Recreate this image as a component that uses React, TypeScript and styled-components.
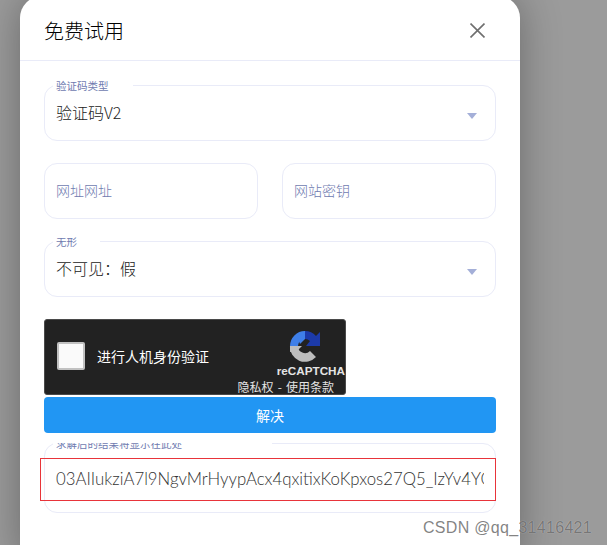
import { FC } from "react";
import styled, { createGlobalStyle } from "styled-components";

const CJK = `"Noto Sans CJK SC", "Noto Sans", sans-serif`;
const TOKEN = "03AIIukziA7l9NgvMrHyypAcx4qxitixKoKpxos27Q5_IzYv4YQ8mTnRwE2";

const GlobalStyle = createGlobalStyle`
  html, body {
    margin: 0;
    height: 100%;
    overflow: hidden;
    background: #9b9b9b;
    font-family: ${CJK};
  }
`;

type SelectFieldProps = {
  label: string;
  value: string;
  notch: number;
};

const SelectField: FC<SelectFieldProps> = ({ label, value, notch }) => (
  <Field>
    <FloatLabel $width={notch}>{label}</FloatLabel>
    <Value>{value}</Value>
    <Caret />
  </Field>
);

const RecaptchaLogo: FC = () => (
  <svg width="32" height="32" viewBox="0 0 32 32">
    <path d="M1 16 A15 15 0 0 1 16 1 L20 5 L16 9 A7 7 0 0 0 9 16 Z" fill="#3f7fe8" />
    <path d="M16 1 L20 5 L16 9 L11 14 L8 6 Z" fill="#3f7fe8" />
    <path d="M16 1 A15 15 0 0 1 27 6 L31 2 V16 H17 L21 11 A7 7 0 0 0 16 9 Z" fill="#1c3aa9" />
    <path d="M1 16 A15 15 0 0 0 27 27 L21 21 A7 7 0 0 1 9 16 L12 16 L1 16 Z" fill="#bdbdbd" />
    <path d="M1 16 H13 L8 21 L1 22 Z" fill="#bdbdbd" />
  </svg>
);

export default function App() {
  return (
    <>
      <GlobalStyle />
      <Page>
        <Modal>
          <Header>
            <Title>免费试用</Title>
            <CloseIcon viewBox="0 0 14 14">
              <path d="M0.5 0.5 L13.5 13.5 M13.5 0.5 L0.5 13.5" />
            </CloseIcon>
          </Header>
          <Body>
            <SelectField label="验证码类型" value="验证码V2" notch={80} />
            <Row>
              <RowField>
                <Placeholder>网址网址</Placeholder>
              </RowField>
              <RowField>
                <Placeholder>网站密钥</Placeholder>
              </RowField>
            </Row>
            <SelectField label="无形" value="不可见：假" notch={47} />
            <CaptchaGroup>
              <Captcha>
                <Checkbox />
                <CaptchaText>进行人机身份验证</CaptchaText>
                <CaptchaBrand>
                  <RecaptchaLogo />
                  <BrandName>reCAPTCHA</BrandName>
                  <BrandLinks>隐私权 - 使用条款</BrandLinks>
                </CaptchaBrand>
              </Captcha>
              <SolveButton>解决</SolveButton>
            </CaptchaGroup>
            <ResultField>
              <ClippedLabel>
                <span>求解后的结果将显示在此处</span>
              </ClippedLabel>
              <TokenText>{TOKEN}</TokenText>
              <RedMark />
            </ResultField>
          </Body>
        </Modal>
        <Watermark>CSDN @qq_31416421</Watermark>
      </Page>
    </>
  );
}

const Page = styled.div`
  position: relative;
  width: 607px;
  height: 545px;
  overflow: hidden;
  padding-left: 20px;
  box-sizing: border-box;
`;

const Modal = styled.div`
  width: 500px;
  height: 570px;
  margin-top: -4px;
  background: #fff;
  border-radius: 22px;
  box-shadow: 0 0 42px rgba(0, 0, 0, 0.32);
`;

const Header = styled.div`
  display: flex;
  align-items: center;
  justify-content: space-between;
  box-sizing: border-box;
  height: 65px;
  padding: 4px 35px 0 24px;
  border-bottom: 1px solid #e9ebf8;
`;

const Title = styled.div`
  font-size: 20px;
  font-weight: 300;
  color: #000;
`;

const CloseIcon = styled.svg`
  width: 15px;
  height: 15px;
  fill: none;
  stroke: #6f6f6f;
  stroke-width: 1.5;
`;

const Body = styled.div`
  display: flex;
  flex-direction: column;
  gap: 22px;
  padding: 24px 24px 0;
`;

const Row = styled.div`
  display: flex;
  gap: 24px;
`;

const Field = styled.div`
  position: relative;
  display: flex;
  align-items: center;
  box-sizing: border-box;
  height: 56px;
  padding: 0 11px 2px;
  border: 1px solid #e9ebf8;
  border-radius: 13px;
`;

const RowField = styled(Field)`
  flex: 1;
`;

const FloatLabel = styled.div<{ $width: number }>`
  position: absolute;
  top: -7px;
  left: 8px;
  box-sizing: border-box;
  width: ${(p) => p.$width}px;
  padding-left: 3px;
  background: #fff;
  font-size: 10.5px;
  line-height: 13px;
  color: #6f7bb0;
`;

const Value = styled.div`
  font-size: 16px;
  font-weight: 300;
  color: #222;
`;

const Placeholder = styled.div`
  font-size: 14px;
  font-weight: 300;
  color: #6f7bb0;
`;

const Caret = styled.div`
  position: absolute;
  right: 18px;
  top: 27px;
  border-left: 5px solid transparent;
  border-right: 5px solid transparent;
  border-top: 6px solid #a4afd8;
`;

const CaptchaGroup = styled.div`
  display: flex;
  flex-direction: column;
  gap: 2px;
`;

const Captcha = styled.div`
  display: flex;
  align-items: center;
  box-sizing: border-box;
  width: 302px;
  height: 76px;
  padding: 0 0 2px 12px;
  background: #222;
  border: 1px solid #4a4a4a;
  border-radius: 3px;
`;

const Checkbox = styled.div`
  box-sizing: border-box;
  width: 28px;
  height: 28px;
  background: #fafafa;
  border: 2px solid #c1c1c1;
  border-radius: 2px;
`;

const CaptchaText = styled.div`
  margin-left: 12px;
  font-size: 14px;
  color: #fff;
`;

const CaptchaBrand = styled.div`
  align-self: stretch;
  margin-left: auto;
  padding-top: 10px;
  width: 60px;
  display: flex;
  flex-direction: column;
  align-items: flex-end;

  svg {
    flex: none;
    margin-right: 24px;
  }
`;

const BrandName = styled.div`
  margin-top: 2px;
  font-family: "Liberation Sans", sans-serif;
  font-size: 11.7px;
  font-weight: 700;
  line-height: 14px;
  color: #e4e4e4;
`;

const BrandLinks = styled.div`
  margin-top: 1px;
  margin-right: 11px;
  font-size: 12px;
  line-height: 15px;
  white-space: nowrap;
  word-spacing: 1.5px;
  color: #e4e4e4;
`;

const SolveButton = styled.button`
  height: 36px;
  padding: 0;
  border: none;
  border-radius: 4px;
  background: #2196f3;
  color: #fff;
  font-family: ${CJK};
  font-size: 14px;
`;

const ResultField = styled(Field)`
  height: 70px;
  margin-top: -12px;
  padding-bottom: 0;
`;

const ClippedLabel = styled.div`
  position: absolute;
  top: -1px;
  left: 8px;
  width: 216px;
  height: 7px;
  padding-left: 3px;
  overflow: hidden;
  background: #fff;
  font-size: 10.5px;
  line-height: 13px;
  color: #6f7bb0;

  span {
    display: block;
    margin-top: -6px;
  }
`;

const TokenText = styled.div`
  width: 428px;
  overflow: hidden;
  white-space: nowrap;
  font-family: Lato, sans-serif;
  font-size: 16.8px;
  font-weight: 300;
  color: #333;
`;

const RedMark = styled.div`
  position: absolute;
  left: -5px;
  top: 14px;
  width: 456px;
  height: 43px;
  box-sizing: border-box;
  border: 1px solid #e8343a;
`;

const Watermark = styled.div`
  position: absolute;
  right: 15px;
  bottom: 8px;
  font-family: "Liberation Sans", sans-serif;
  font-size: 16px;
  letter-spacing: 0.3px;
  color: rgba(90, 90, 90, 0.75);
  text-shadow: 0 0 1px rgba(255, 255, 255, 0.6);
`;
